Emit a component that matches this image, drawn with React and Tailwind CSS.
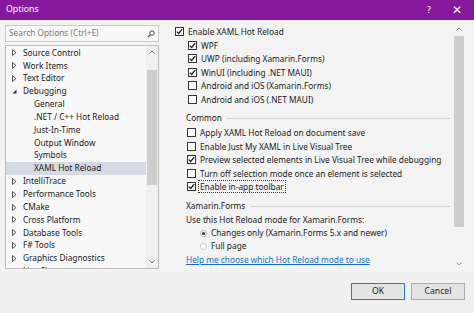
import React from "react";

const Check = ({ checked }) => (
  <span className="w-[9px] h-[9px] border border-[#333] bg-white flex items-center justify-center shrink-0">
    {checked && (
      <svg width="7" height="7" viewBox="0 0 7 7">
        <path d="M0.8 3.6 L2.7 5.5 L6.2 1.2" fill="none" stroke="#1a1a1a" strokeWidth="1.3" />
      </svg>
    )}
  </span>
);

const CheckRow = ({ checked, label, indent, focus }) => (
  <div className={`flex items-center h-[13.5px] whitespace-nowrap ${indent ? "pl-[13px]" : ""}`}>
    <Check checked={checked} />
    <span className={`ml-[3px] leading-[11px] px-[1px] ${focus ? "outline outline-1 outline-dotted outline-[#333]" : ""}`}>{label}</span>
  </div>
);

const Collapsed = () => (
  <svg width="5" height="7" viewBox="0 0 5 7" className="shrink-0">
    <path d="M0.5 0.5 L4 3.5 L0.5 6.5 Z" fill="none" stroke="#555" strokeWidth="1" />
  </svg>
);
const Expanded = () => (
  <svg width="5" height="7" viewBox="0 0 5 7" className="shrink-0">
    <path d="M4.5 1.5 L4.5 5.5 L0.5 5.5 Z" fill="#333" />
  </svg>
);

const TreeTop = ({ label, open }) => (
  <div className="flex items-center h-[12.85px] shrink-0 pl-[6px] whitespace-nowrap">
    <span className="w-[5px] flex justify-center">{open ? <Expanded /> : <Collapsed />}</span>
    <span className="ml-[6px]">{label}</span>
  </div>
);
const TreeChild = ({ label, selected }) => (
  <div className={`flex items-center h-[12.85px] shrink-0 pl-[28px] whitespace-nowrap ${selected ? "bg-[#d5d9e3]" : ""}`}>
    <span>{label}</span>
  </div>
);

const SectionHeader = ({ label }) => (
  <div className="flex items-center h-[13px] mt-[6px]">
    <span>{label}</span>
    <div className="flex-1 h-px bg-[#d2d2d2] ml-[5px]" />
  </div>
);

export default function App() {
  return (
    <div
      className="w-[474px] h-[313px] bg-[#f0f0f0] flex flex-col overflow-hidden text-[#1a1a1a] text-[8.3px]"
      style={{ fontFamily: '"Noto Sans", "Open Sans", sans-serif' }}
    >
      {/* Title bar */}
      <div className="h-[20px] bg-[#86199b] flex items-center text-white shrink-0">
        <span className="ml-[6px] text-[8.8px]">Options</span>
        <div className="flex-1" />
        <span className="text-[9px] mr-[21px]">?</span>
        <span className="text-[12px] mr-[12px] leading-none">✕</span>
      </div>

      {/* Main */}
      <div className="flex h-[252px] bg-[#f3f3f3] shrink-0">
        {/* Left */}
        <div className="w-[165px] pl-[5px] pt-[5px] flex flex-col shrink-0">
          <div className="w-[154px] h-[17px] border border-[#c8c8c8] bg-[#f9f9f9] flex items-center px-[3px]">
            <span className="text-[#7a7a7a] flex-1">Search Options (Ctrl+E)</span>
            <svg width="8" height="8" viewBox="0 0 8 8">
              <circle cx="5" cy="3" r="2.2" fill="none" stroke="#444" strokeWidth="1" />
              <path d="M3.4 4.6 L0.8 7.2" stroke="#444" strokeWidth="1.2" />
            </svg>
          </div>
          <div className="w-[154px] h-[224px] mt-[3px] border border-[#bdbdbd] bg-[#f8f8f8] flex overflow-hidden">
            <div className="flex-1 pt-[0.5px] flex flex-col overflow-hidden">
              <TreeTop label="Source Control" />
              <TreeTop label="Work Items" />
              <TreeTop label="Text Editor" />
              <TreeTop label="Debugging" open />
              <TreeChild label="General" />
              <TreeChild label=".NET / C++ Hot Reload" />
              <TreeChild label="Just-In-Time" />
              <TreeChild label="Output Window" />
              <TreeChild label="Symbols" />
              <TreeChild label="XAML Hot Reload" selected />
              <TreeTop label="IntelliTrace" />
              <TreeTop label="Performance Tools" />
              <TreeTop label="CMake" />
              <TreeTop label="Cross Platform" />
              <TreeTop label="Database Tools" />
              <TreeTop label="F# Tools" />
              <TreeTop label="Graphics Diagnostics" />
              <TreeTop label="Live Share" />
            </div>
            <div className="w-[12px] flex flex-col items-center shrink-0 bg-[#f0f0f0]">
              <div className="h-[12px] flex items-center justify-center">
                <svg width="6" height="4" viewBox="0 0 6 4"><path d="M0.5 3.5 L3 1 L5.5 3.5" fill="none" stroke="#777" strokeWidth="1" /></svg>
              </div>
              <div className="w-[10px] h-[115px] mt-[12px] bg-[#cdcdcd]" />
              <div className="flex-1" />
              <div className="h-[12px] flex items-center justify-center">
                <svg width="6" height="4" viewBox="0 0 6 4"><path d="M0.5 0.5 L3 3 L5.5 0.5" fill="none" stroke="#777" strokeWidth="1" /></svg>
              </div>
            </div>
          </div>
        </div>

        {/* Right */}
        <div className="flex-1 flex min-w-0">
          <div className="flex-1 min-w-0 overflow-hidden pl-[10px] pt-[5px] pr-[2px] flex flex-col">
            <CheckRow checked label="Enable XAML Hot Reload" />
            <CheckRow checked indent label="WPF" />
            <CheckRow checked indent label="UWP (including Xamarin.Forms)" />
            <CheckRow checked indent label="WinUI (including .NET MAUI)" />
            <CheckRow indent label="Android and iOS (Xamarin.Forms)" />
            <CheckRow indent label="Android and iOS (.NET MAUI)" />
            <div className="pl-[11px] flex flex-col">
              <SectionHeader label="Common" />
              <div className="pl-[1px] mt-[1px] flex flex-col">
                <CheckRow label="Apply XAML Hot Reload on document save" />
                <CheckRow label="Enable Just My XAML in Live Visual Tree" />
                <CheckRow checked label="Preview selected elements in Live Visual Tree while debugging" />
                <CheckRow label="Turn off selection mode once an element is selected" />
                <CheckRow checked focus label="Enable in-app toolbar" />
              </div>
              <SectionHeader label="Xamarin.Forms" />
              <div className="h-[13.5px] flex items-center mt-[1px] whitespace-nowrap">Use this Hot Reload mode for Xamarin.Forms:</div>
              <div className="h-[13px] flex items-center pl-[14px] whitespace-nowrap">
                <span className="w-[7px] h-[7px] rounded-full border border-[#b5b5b5] bg-white flex items-center justify-center shrink-0">
                  <span className="w-[3px] h-[3px] rounded-full bg-[#333]" />
                </span>
                <span className="ml-[4px]">Changes only (Xamarin.Forms 5.x and newer)</span>
              </div>
              <div className="h-[13px] flex items-center pl-[14px]">
                <span className="w-[7px] h-[7px] rounded-full border border-[#c5c5c5] bg-white shrink-0" />
                <span className="ml-[4px]">Full page</span>
              </div>
              <div className="h-[15px] flex items-center whitespace-nowrap">
                <span className="text-[#1a6fc4] underline">Help me choose which Hot Reload mode to use</span>
              </div>
            </div>
          </div>
          {/* right scrollbar */}
          <div className="w-[14px] mr-[8px] flex flex-col items-center shrink-0 pt-[4px] pb-[2px]">
            <div className="h-[10px] flex items-center justify-center">
              <svg width="6" height="4" viewBox="0 0 6 4"><path d="M0.5 3.5 L3 1 L5.5 3.5" fill="none" stroke="#888" strokeWidth="1" /></svg>
            </div>
            <div className="w-[10px] h-[191px] mt-[2px] bg-[#cdcdcd]" />
            <div className="flex-1" />
            <div className="h-[12px] flex items-center justify-center">
              <svg width="6" height="4" viewBox="0 0 6 4"><path d="M0.5 0.5 L3 3 L5.5 0.5" fill="none" stroke="#999" strokeWidth="1" /></svg>
            </div>
          </div>
        </div>
      </div>

      {/* Buttons */}
      <div className="flex-1 flex justify-end items-start pt-[11px] pr-[9px] gap-[6px]">
        <button className="w-[54px] h-[17px] border border-[#2a7bd0] bg-[#e3e3e3] flex items-center justify-center text-[8.6px]">OK</button>
        <button className="w-[54px] h-[17px] border border-[#adadad] bg-[#e3e3e3] flex items-center justify-center text-[8.6px]">Cancel</button>
      </div>
    </div>
  );
}
